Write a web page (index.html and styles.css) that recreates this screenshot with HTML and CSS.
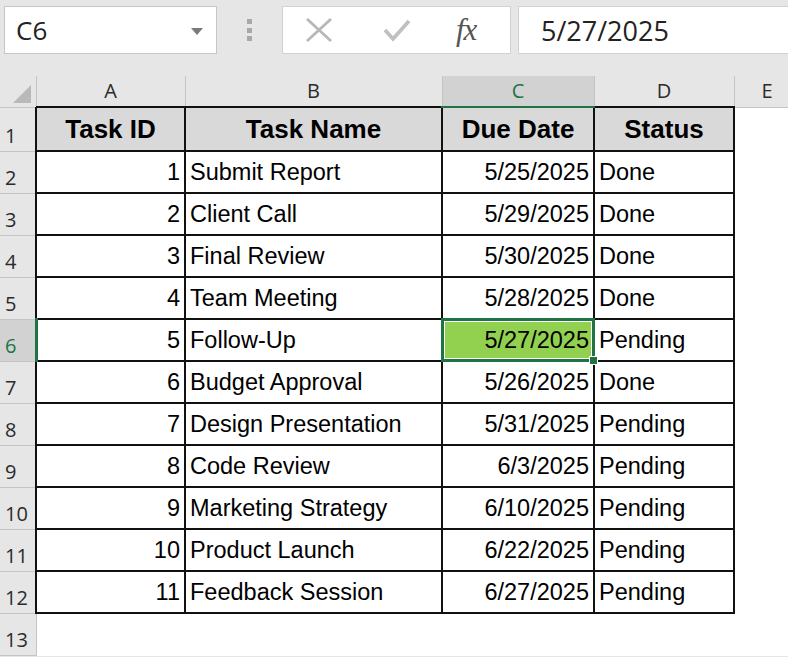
FILE: index.html
```html
<!DOCTYPE html>
<html>
<head>
<meta charset="utf-8">
<link rel="stylesheet" href="styles.css">
</head>
<body>
<div class="app">
  <div class="toolbar">
    <div class="namebox">
      <span class="namebox-text">C6</span>
      <svg class="dd" width="12" height="7" viewBox="0 0 12 7"><polygon points="0,0 12,0 6,7" fill="#7a7a7a"/></svg>
    </div>
    <div class="grip">
      <span class="dot"></span><span class="dot"></span><span class="dot"></span>
    </div>
    <div class="fbuttons">
      <svg class="ico-x" width="28" height="24" viewBox="0 0 28 24"><path d="M2 1 L26 23 M26 1 L2 23" stroke="#b8b8b8" stroke-width="2.8" fill="none"/></svg>
      <svg class="ico-check" width="28" height="24" viewBox="0 0 28 24"><path d="M2 12 L10 21 L26 3" stroke="#c0c0c0" stroke-width="3.8" fill="none" stroke-linejoin="miter"/></svg>
      <span class="fx">fx</span>
    </div>
    <div class="finput"><span class="finput-text">5/27/2025</span></div>
  </div>
  <table class="sheet">
    <colgroup>
      <col class="c-rh"><col class="c-a"><col class="c-b"><col class="c-c"><col class="c-d"><col class="c-e">
    </colgroup>
    <tr class="hdr">
      <th class="corner"><svg class="tri" width="18" height="18" viewBox="0 0 18 18"><polygon points="18,0 18,18 0,18" fill="#b9b9b9"/></svg></th>
      <th class="colh">A</th><th class="colh">B</th><th class="colh selc">C</th><th class="colh">D</th><th class="colh">E</th>
    </tr>
    <tr class="r1">
      <th class="rowh">1</th>
      <td class="d head">Task ID</td><td class="d head">Task Name</td><td class="d head">Due Date</td><td class="d head">Status</td><td class="e"></td>
    </tr>
    <tr><th class="rowh">2</th><td class="d num">1</td><td class="d txt">Submit Report</td><td class="d num">5/25/2025</td><td class="d txt">Done</td><td class="e"></td></tr>
    <tr><th class="rowh">3</th><td class="d num">2</td><td class="d txt">Client Call</td><td class="d num">5/29/2025</td><td class="d txt">Done</td><td class="e"></td></tr>
    <tr><th class="rowh">4</th><td class="d num">3</td><td class="d txt">Final Review</td><td class="d num">5/30/2025</td><td class="d txt">Done</td><td class="e"></td></tr>
    <tr><th class="rowh">5</th><td class="d num">4</td><td class="d txt">Team Meeting</td><td class="d num">5/28/2025</td><td class="d txt">Done</td><td class="e"></td></tr>
    <tr><th class="rowh selr">6</th><td class="d num">5</td><td class="d txt">Follow-Up</td><td class="d num active"><div class="selbox"></div><div class="handle"></div><span class="celltext">5/27/2025</span></td><td class="d txt">Pending</td><td class="e"></td></tr>
    <tr><th class="rowh">7</th><td class="d num">6</td><td class="d txt">Budget Approval</td><td class="d num">5/26/2025</td><td class="d txt">Done</td><td class="e"></td></tr>
    <tr><th class="rowh">8</th><td class="d num">7</td><td class="d txt">Design Presentation</td><td class="d num">5/31/2025</td><td class="d txt">Pending</td><td class="e"></td></tr>
    <tr><th class="rowh">9</th><td class="d num">8</td><td class="d txt">Code Review</td><td class="d num">6/3/2025</td><td class="d txt">Pending</td><td class="e"></td></tr>
    <tr><th class="rowh">10</th><td class="d num">9</td><td class="d txt">Marketing Strategy</td><td class="d num">6/10/2025</td><td class="d txt">Pending</td><td class="e"></td></tr>
    <tr><th class="rowh">11</th><td class="d num">10</td><td class="d txt">Product Launch</td><td class="d num">6/22/2025</td><td class="d txt">Pending</td><td class="e"></td></tr>
    <tr><th class="rowh">12</th><td class="d num">11</td><td class="d txt">Feedback Session</td><td class="d num">6/27/2025</td><td class="d txt">Pending</td><td class="e"></td></tr>
    <tr><th class="rowh">13</th><td class="e"></td><td class="e"></td><td class="e"></td><td class="e"></td><td class="e"></td></tr>
  </table>
</div>
</body>
</html>
```
FILE: styles.css
```css
html, body {
  margin: 0;
  padding: 0;
  background: #ffffff;
}
.app {
  width: 788px;
  height: 657px;
  overflow: hidden;
  background: #e6e6e6;
}
.toolbar {
  display: flex;
  align-items: stretch;
  height: 76px;
  padding: 6px 0 0 4px;
  box-sizing: border-box;
}
.namebox {
  width: 213px;
  height: 48px;
  box-sizing: border-box;
  background: #fff;
  border: 1px solid #c6c6c6;
  display: flex;
  align-items: center;
  justify-content: space-between;
  padding: 0 13px 0 11px;
}
.namebox-text {
  font-family: "Open Sans", "Noto Sans", sans-serif;
  font-size: 26px;
  color: #222;
}
.dd { margin-top: 2px; }
.grip {
  width: 65px;
  height: 48px;
  display: flex;
  flex-direction: column;
  align-items: flex-start;
  justify-content: center;
  gap: 3.5px;
  padding-left: 30px;
  box-sizing: border-box;
}
.dot {
  width: 5px;
  height: 5px;
  background: #a8a8a8;
}
.fbuttons {
  width: 229px;
  height: 48px;
  box-sizing: border-box;
  background: #fff;
  border: 1px solid #d2d2d2;
  display: flex;
  align-items: center;
  padding-left: 22px;
}
.ico-x { margin-right: 50px; }
.ico-check { margin-right: 45px; }
.fx {
  font-family: "Liberation Serif", "DejaVu Serif", serif;
  font-style: italic;
  font-size: 31px;
  color: #555;
  letter-spacing: -1px;
  margin-top: 0;
}
.finput {
  flex: 1;
  margin-left: 7px;
  height: 48px;
  box-sizing: border-box;
  background: #fff;
  border: 1px solid #d2d2d2;
  border-right: none;
  display: flex;
  align-items: center;
  padding-left: 22px;
}
.finput-text {
  font-family: "Open Sans", "Noto Sans", sans-serif;
  font-size: 27px;
  color: #222;
}
.sheet {
  border-collapse: collapse;
  table-layout: fixed;
  width: 800px;
  background: #fff;
}
.c-rh { width: 36px; }
.c-a { width: 149px; }
.c-b { width: 257px; }
.c-c { width: 152px; }
.c-d { width: 140px; }
.c-e { width: 66px; }
th {
  font-weight: normal;
  padding: 0;
  background: #e6e6e6;
  border: 1px solid #c4c4c4;
  font-family: "Open Sans", "Noto Sans", sans-serif;
  font-size: 20px;
  color: #2b2b2b;
}
.hdr { height: 31px; }
.hdr th { border-top: none; }
.corner {
  position: relative;
  text-align: right;
  vertical-align: bottom;
  border-left: none;
}
.tri {
  display: block;
  margin: 0 5px 4px auto;
}
.colh {
  text-align: center;
  vertical-align: middle;
  line-height: 1;
}
.colh.selc {
  background: #d2d2d2;
  color: #217346;
  border-bottom: 2px solid #217346;
}
.rowh {
  text-align: left;
  vertical-align: bottom;
  padding: 0 0 5px 5px;
  line-height: 1;
  border-left: none;
}
.rowh.selr {
  background: #d2d2d2;
  color: #217346;
  border-right: 3px solid #217346;
}
.r1 { height: 44px; }
tr { height: 42px; }
td {
  padding: 0;
  font-family: "Liberation Sans", Arial, sans-serif;
  font-size: 23.5px;
  color: #000;
  white-space: nowrap;
  overflow: visible;
}
td.d {
  border: 2px solid #111;
  vertical-align: middle;
  padding-top: 1px;
}
td.head {
  background: #d9d9d9;
  font-weight: bold;
  font-size: 26px;
  text-align: center;
}
td.num {
  text-align: right;
  padding-right: 4px;
}
td.txt {
  text-align: left;
  padding-left: 4px;
}
td.e {
  border: none;
  background: #fff;
}
td.active {
  position: relative;
  background: #92d050;
}
.celltext {
  position: relative;
}
.selbox {
  position: absolute;
  left: -2px;
  top: -2px;
  right: -2px;
  bottom: -2px;
  border: 3px solid #217346;
  box-shadow: inset 0 0 0 1px #fff;
}
.handle {
  position: absolute;
  right: -5px;
  bottom: -5px;
  width: 7px;
  height: 7px;
  background: #217346;
  border: 1px solid #fff;
}
```
